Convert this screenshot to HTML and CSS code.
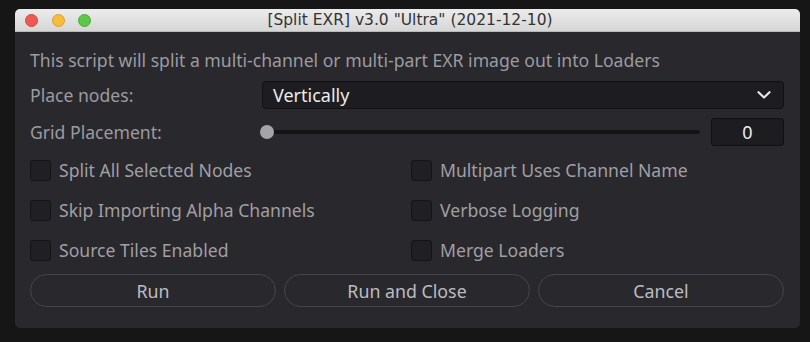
FILE: index.html
```html
<!DOCTYPE html>
<html>
<head>
<meta charset="utf-8">
<link rel="stylesheet" href="styles.css">
</head>
<body>
<div class="window">
  <div class="titlebar">
    <div class="lights">
      <span class="light red"></span>
      <span class="light yellow"></span>
      <span class="light green"></span>
    </div>
    <div class="title">[Split EXR] v3.0 "Ultra" (2021-12-10)</div>
  </div>
  <div class="content">
    <div class="intro">This script will split a multi-channel or multi-part EXR image out into Loaders</div>
    <div class="row row-select">
      <div class="label">Place nodes:</div>
      <div class="select">
        <span class="select-text">Vertically</span>
        <svg class="chevron" width="14" height="8" viewBox="0 0 14 8"><path d="M1.5 1.2 L7 6.5 L12.5 1.2" fill="none" stroke="#e6e6e6" stroke-width="2.2" stroke-linecap="round" stroke-linejoin="round"/></svg>
      </div>
    </div>
    <div class="row row-slider">
      <div class="label">Grid Placement:</div>
      <div class="slider-wrap">
        <div class="slider">
          <div class="track"></div>
          <div class="handle"></div>
        </div>
        <div class="numbox">0</div>
      </div>
    </div>
    <div class="checks">
      <label class="check"><span class="box"></span><span class="ctext">Split All Selected Nodes</span></label>
      <label class="check"><span class="box"></span><span class="ctext">Multipart Uses Channel Name</span></label>
      <label class="check"><span class="box"></span><span class="ctext">Skip Importing Alpha Channels</span></label>
      <label class="check"><span class="box"></span><span class="ctext">Verbose Logging</span></label>
      <label class="check"><span class="box"></span><span class="ctext">Source Tiles Enabled</span></label>
      <label class="check"><span class="box"></span><span class="ctext">Merge Loaders</span></label>
    </div>
    <div class="buttons">
      <button class="btn">Run</button>
      <button class="btn">Run and Close</button>
      <button class="btn">Cancel</button>
    </div>
  </div>
</div>
</body>
</html>
```

FILE: styles.css
```css
html, body {
  margin: 0;
  padding: 0;
  background: #161617;
  width: 810px;
  height: 342px;
  overflow: hidden;
}

.window {
  margin: 9px 0 0 15px;
  width: 785px;
  height: 319px;
  background: #29282d;
  border-radius: 5px;
  overflow: hidden;
  display: flex;
  flex-direction: column;
}

.titlebar {
  height: 23px;
  background: linear-gradient(#ececec, #d6d6d6);
  border-bottom: 1px solid #b9b9b9;
  box-sizing: border-box;
  position: relative;
  display: flex;
  align-items: center;
  justify-content: center;
}

.lights {
  position: absolute;
  left: 10px;
  top: 5px;
  display: flex;
  gap: 13.5px;
}

.light {
  width: 13px;
  height: 13px;
  border-radius: 50%;
  box-sizing: border-box;
}
.red { background: #ee5a52; border: 1px solid #d2463f; }
.yellow { background: #f5bd3b; border: 1px solid #d9a12b; }
.green { background: #5fc748; border: 1px solid #4aab36; }

.title {
  font-family: "DejaVu Sans", Verdana, sans-serif;
  font-size: 15.5px;
  color: #333333;
  padding-left: 5px;
  white-space: nowrap;
}

.content {
  padding: 17px 16px 0 15px;
  font-family: "Noto Sans", "Open Sans", sans-serif;
  font-size: 17.6px;
  color: #9c9ba0;
  display: flex;
  flex-direction: column;
}

.intro {
  line-height: 22px;
  height: 22px;
  white-space: nowrap;
}

.row {
  display: grid;
  grid-template-columns: 232px 1fr;
  align-items: center;
  height: 28px;
}
.row-select { margin-top: 10px; }
.row-slider { margin-top: 9px; }

.label {
  white-space: nowrap;
}

.select {
  height: 28px;
  box-sizing: border-box;
  background: #1d1c20;
  border: 1px solid #111113;
  border-radius: 4px;
  display: flex;
  align-items: center;
  justify-content: space-between;
  padding: 0 12px 0 10px;
}
.select-text {
  color: #ececec;
  font-size: 18px;
}
.chevron { display: block; }

.slider-wrap {
  display: flex;
  align-items: center;
  gap: 11px;
  height: 28px;
}
.slider {
  flex: 1;
  position: relative;
  height: 14px;
}
.track {
  position: absolute;
  left: 5px;
  right: 0;
  top: 5px;
  height: 4px;
  background: #141416;
  border-radius: 2px;
}
.handle {
  position: absolute;
  left: -2px;
  top: 0;
  width: 14px;
  height: 14px;
  border-radius: 50%;
  background: #a5a5a8;
}
.numbox {
  width: 73px;
  height: 28px;
  box-sizing: border-box;
  background: #1d1c20;
  border: 1px solid #111113;
  border-radius: 3px;
  color: #ececec;
  display: flex;
  align-items: center;
  justify-content: center;
  font-size: 18px;
}

.checks {
  margin-top: 4px;
  display: grid;
  grid-template-columns: 1fr 1fr;
  column-gap: 8px;
  grid-auto-rows: 40px;
}
.check {
  display: flex;
  align-items: center;
  gap: 8px;
  white-space: nowrap;
  color: #a09fa4;
}
.box {
  width: 21px;
  height: 21px;
  box-sizing: border-box;
  background: #201f23;
  border: 1.5px solid #141416;
  border-radius: 3px;
  flex: none;
}

.buttons {
  margin-top: 4px;
  display: grid;
  grid-template-columns: 1fr 1fr 1fr;
  column-gap: 8px;
}
.btn {
  height: 33px;
  box-sizing: border-box;
  background: #29282d;
  border: 1.5px solid #47464c;
  border-radius: 17px;
  color: #bdbcc1;
  font-family: "Noto Sans", "Open Sans", sans-serif;
  font-size: 17.8px;
  padding: 0;
}
```
